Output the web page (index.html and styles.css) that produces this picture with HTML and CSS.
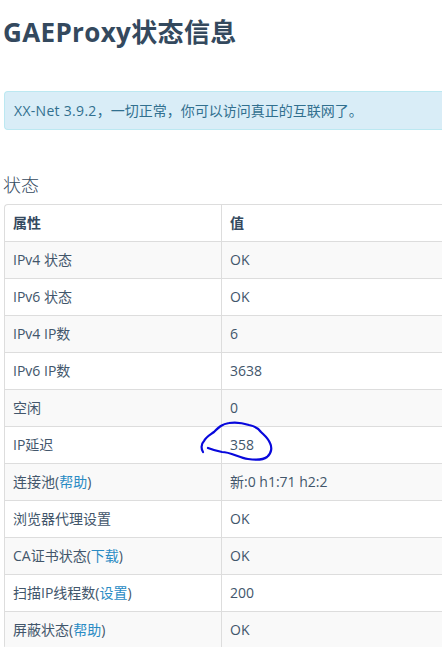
FILE: index.html
```html
<!DOCTYPE html>
<html lang="zh-CN">
<head>
    <meta charset="UTF-8">
    <title>GAEProxy状态信息</title>
    <link rel="stylesheet" href="styles.css">
</head>
<body>
    <div class="page">
        <h1>GAEProxy状态信息</h1>
        <div class="alert"><span class="version">XX-Net 3.9.2</span>，一切正常，你可以访问真正的互联网了。</div>
        <h4>状态</h4>
        <table class="status-table">
            <thead>
                <tr><th>属性</th><th>值</th></tr>
            </thead>
            <tbody>
                <tr><td>IPv4 状态</td><td>OK</td></tr>
                <tr><td>IPv6 状态</td><td>OK</td></tr>
                <tr><td>IPv4 IP数</td><td>6</td></tr>
                <tr><td>IPv6 IP数</td><td>3638</td></tr>
                <tr><td>空闲</td><td>0</td></tr>
                <tr><td>IP延迟</td><td>358</td></tr>
                <tr><td>连接池(<a href="#">帮助</a>)</td><td>新:0 h1:71 h2:2</td></tr>
                <tr><td>浏览器代理设置</td><td>OK</td></tr>
                <tr><td>CA证书状态(<a href="#">下载</a>)</td><td>OK</td></tr>
                <tr><td>扫描IP线程数(<a href="#">设置</a>)</td><td>200</td></tr>
                <tr><td>屏蔽状态(<a href="#">帮助</a>)</td><td>OK</td></tr>
            </tbody>
        </table>
    </div>

    <!-- hand-drawn circle around the IP latency value -->
    <svg class="scribble" width="442" height="647" viewBox="0 0 442 647">
        <path d="M208 448 C213 450 217 451 222 452 C231 452 239 458 248 459 C255 460 263 460 267 457 C272 453 272 447 270 443 C268 438 264 435 261 432 C258 428 254 426 249 425 C243 423 235 422 229 423 C222 424 219 427 214 432 C210 435 206 437 204 441 C201 444 201 449 203 452"/>
    </svg>
</body>
</html>
```

FILE: styles.css
```css
* {
    box-sizing: border-box;
}

html, body {
    height: 100%;
    margin: 0;
    overflow: hidden;
}

body {
    position: relative;
    background-color: #fff;
    color: #34495e;
    font-family: "Open Sans", "Noto Sans CJK SC", sans-serif;
    font-size: 14px;
    line-height: 20px;
}

/* the screenshot is cut off on the right, so boxes stop at the edge */
.page {
    padding-left: 4px;
}

h1 {
    margin: 0 0 0 -1px;
    padding-top: 12px;
    height: 91px;
    font-size: 26px;
    line-height: 40px;
    font-weight: 700;
    letter-spacing: 0.35px;
}

.alert {
    height: 39px;
    padding: 9px 9px;
    color: #31708f;
    background-color: #d9edf7;
    border: 1px solid #bce8f1;
    border-right: none;
    border-radius: 4px 0 0 4px;
}

.version {
    letter-spacing: 0.3px;
}

h4 {
    margin: 0 0 0 -1px;
    padding-top: 44px;
    height: 74px;
    font-size: 18px;
    line-height: 22px;
    font-weight: 300;
}

.status-table {
    width: 100%;
    table-layout: fixed;
    border-collapse: separate;
    border-spacing: 0;
    border: 1px solid #ddd;
    border-right: none;
    border-radius: 4px 0 0 4px;
}

.status-table th, .status-table td {
    height: 37px;
    padding: 8px;
    text-align: left;
    vertical-align: middle;
    border-top: 1px solid #ddd;
    border-left: 1px solid #ddd;
}

.status-table th:first-child, .status-table td:first-child {
    width: 216px;
    border-left: none;
}

.status-table thead th {
    height: 36px;
    border-top: none;
    font-weight: 700;
}

.status-table tbody tr:nth-child(odd) td {
    background-color: #f9f9f9;
}

.status-table td {
    color: #42566b;
}

a {
    color: #2a8bc4;
    text-decoration: none;
}

.scribble {
    position: absolute;
    top: 0;
    left: 0;
    pointer-events: none;
}

.scribble path {
    fill: none;
    stroke: #0808dc;
    stroke-width: 2.2;
    stroke-linecap: round;
    stroke-linejoin: round;
}
```
